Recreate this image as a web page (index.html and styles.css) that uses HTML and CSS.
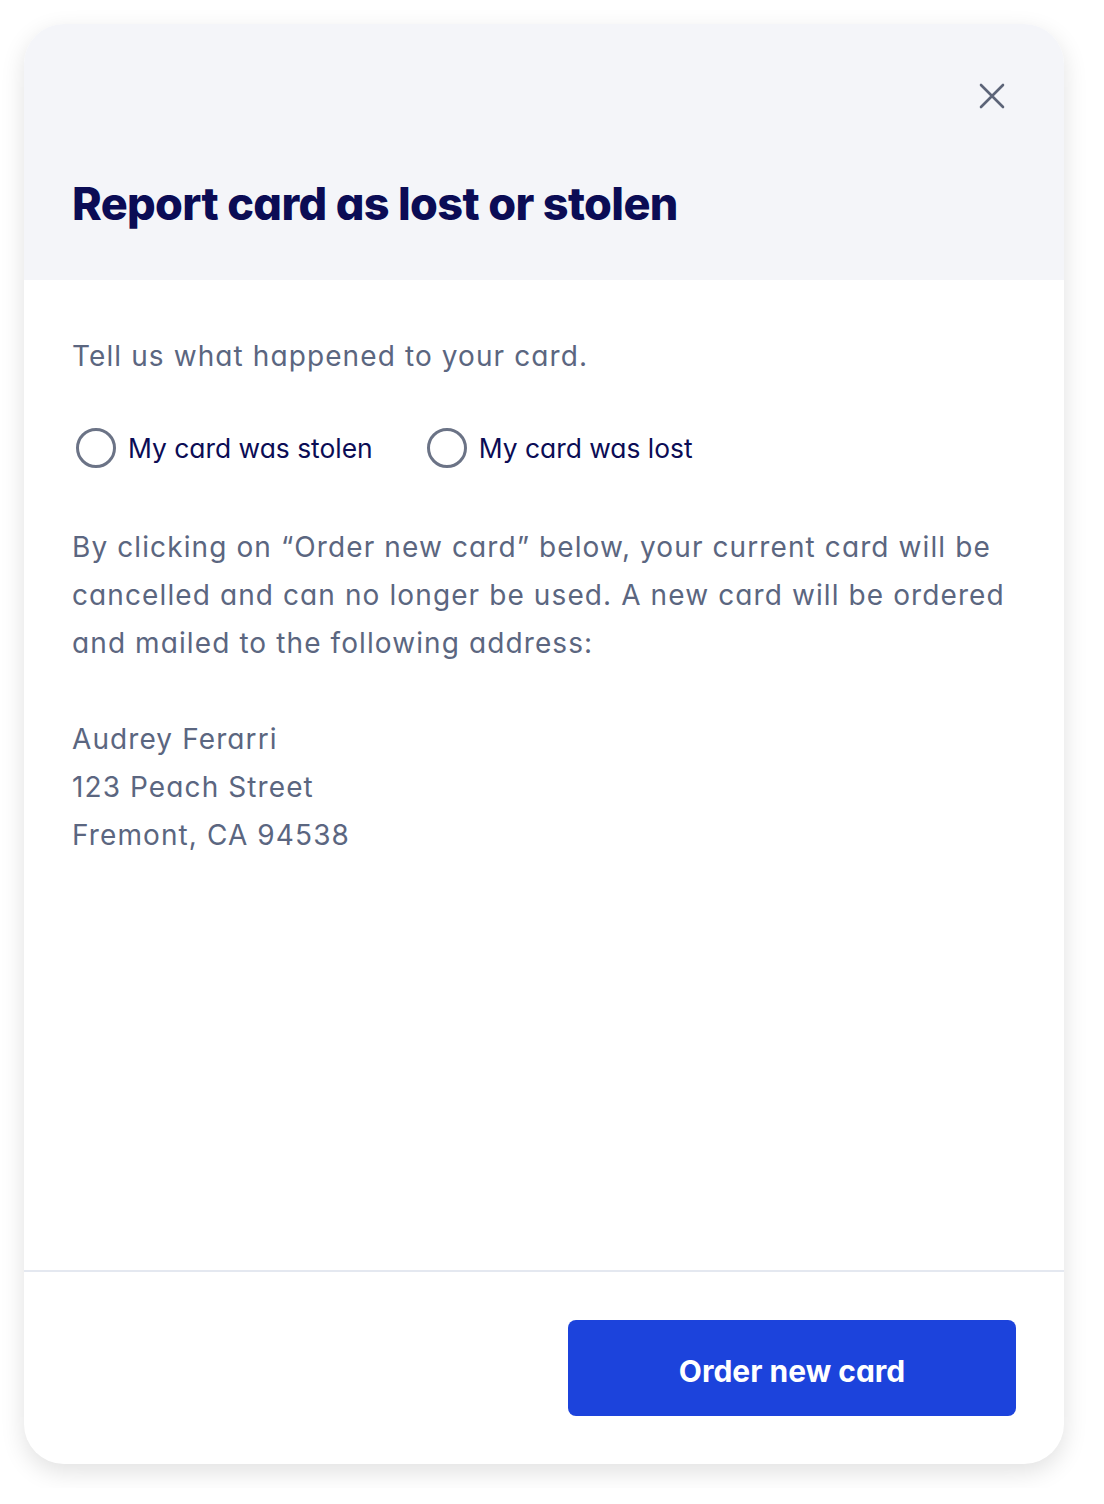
FILE: index.html
```html
<!DOCTYPE html>
<html lang="en">
<head>
    <meta charset="UTF-8">
    <meta name="viewport" content="width=device-width, initial-scale=1.0">
    <title>Report card as lost or stolen</title>
    <link rel="stylesheet" href="styles.css">
</head>
<body>
    <div class="modal">
        <div class="modal-header">
            <button type="button" class="close-btn" aria-label="Close">
                <svg width="28" height="28" viewBox="0 0 28 28" fill="none">
                    <path d="M3 3L25 25M25 3L3 25" stroke="#5c6478" stroke-width="2.6" stroke-linecap="round"/>
                </svg>
            </button>
            <h1>Report card as lost or stolen</h1>
        </div>

        <div class="modal-body">
            <p class="intro">Tell us what happened to your card.</p>

            <div class="radio-group">
                <label class="radio">
                    <input type="radio" name="reason" value="stolen">
                    <span class="radio-mark"></span>
                    My card was stolen
                </label>
                <label class="radio">
                    <input type="radio" name="reason" value="lost">
                    <span class="radio-mark"></span>
                    My card was lost
                </label>
            </div>

            <p class="notice">By clicking on &ldquo;Order new card&rdquo; below, your current card will be cancelled and can no longer be used. A new card will be ordered and mailed to the following address:</p>

            <p class="address">
                Audrey Ferarri<br>
                123 Peach Street<br>
                Fremont, CA 94538
            </p>
        </div>

        <div class="modal-footer">
            <button type="button" class="order-btn">Order new card</button>
        </div>
    </div>
</body>
</html>
```

FILE: styles.css
```css
body {
    margin: 0;
    padding: 24px;
    background-color: #ffffff;
    font-family: Inter, "Noto Sans", sans-serif;
    font-feature-settings: "cv11";
}
.modal {
    width: 1040px;
    height: 1440px;
    display: flex;
    flex-direction: column;
    background-color: #ffffff;
    border-radius: 40px;
    overflow: hidden;
    box-shadow: 0px 8px 24px 0px rgba(0,0,0,0.12);
}
.modal-header {
    height: 256px;
    box-sizing: border-box;
    padding: 58px 48px 0 48px;
    background-color: #f4f5f9;
    display: flex;
    flex-direction: column;
}
.close-btn {
    align-self: flex-end;
    margin-right: 10px;
    width: 28px;
    height: 28px;
    padding: 0;
    border: none;
    background: none;
    cursor: pointer;
}
.modal-header h1 {
    margin: 66px 0 0 0;
    font-size: 45px;
    line-height: 56px;
    font-weight: 800;
    letter-spacing: -0.65px;
    color: #0b0c55;
}
.modal-body {
    flex: 1;
    padding: 52px 48px 0 48px;
    color: #5b6680;
    font-size: 28px;
    line-height: 48px;
    letter-spacing: 1.1px;
}
.modal-body p {
    margin: 0;
}
.radio-group {
    display: flex;
    gap: 54px;
    margin: 44px 0 51px 4px;
}
.radio {
    display: flex;
    align-items: center;
    gap: 12px;
    height: 48px;
    font-size: 26.4px;
    letter-spacing: 0;
    color: #0b0c55;
    cursor: pointer;
}
.radio input {
    display: none;
}
.radio-mark {
    width: 40px;
    height: 40px;
    box-sizing: border-box;
    border: 3px solid #6b7386;
    border-radius: 50%;
}
.notice {
    margin-bottom: 48px !important;
}
.modal-footer {
    border-top: 2px solid #e4e8f0;
    padding: 48px;
    display: flex;
    justify-content: flex-end;
}
.order-btn {
    width: 448px;
    height: 96px;
    padding-top: 6px;
    background-color: #1c43dc;
    color: #ffffff;
    border: none;
    border-radius: 8px;
    font-family: inherit;
    font-feature-settings: "cv11";
    font-size: 30px;
    font-weight: 700;
    cursor: pointer;
}
```
